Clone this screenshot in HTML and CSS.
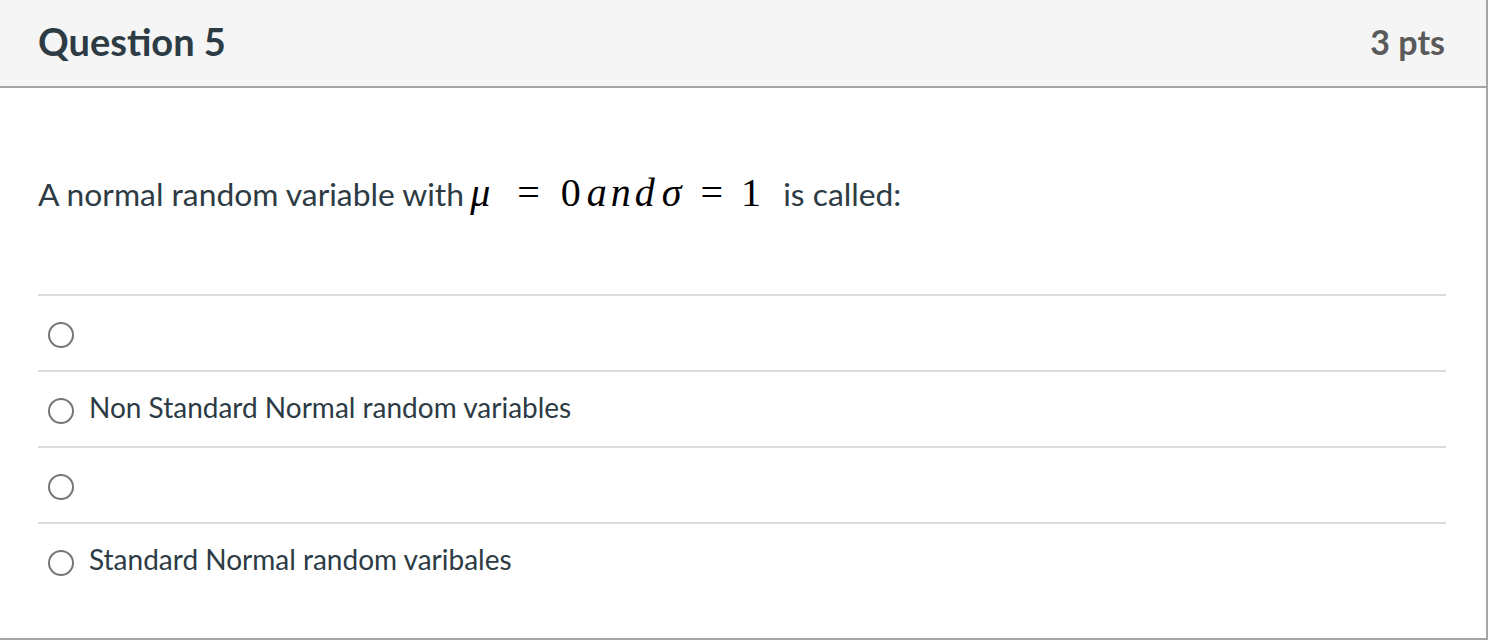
FILE: index.html
```html
<!DOCTYPE html>
<html>
<head>
<meta charset="utf-8">
<link rel="stylesheet" href="styles.css">
</head>
<body>
<div class="question">
  <div class="q-header">
    <h2 class="q-title">Question 5</h2>
    <span class="q-points">3 pts</span>
  </div>
  <div class="q-body">
    <p class="q-text">A normal random variable with <span class="math"><i class="mi mu">μ</i><span class="mo eq1">=</span><span class="mn zero">0</span><i class="mi and">and</i><i class="mi sigma">σ</i><span class="mo eq2">=</span><span class="mn one">1</span></span> is called:</p>
    <div class="answers">
      <label class="answer"><span class="radio"></span><span class="a-text"></span></label>
      <label class="answer"><span class="radio"></span><span class="a-text">Non Standard Normal random variables</span></label>
      <label class="answer"><span class="radio"></span><span class="a-text"></span></label>
      <label class="answer"><span class="radio"></span><span class="a-text">Standard Normal random varibales</span></label>
    </div>
  </div>
</div>
</body>
</html>
```
FILE: styles.css
```css
html, body {
  margin: 0;
  padding: 0;
  background: #ffffff;
}
body {
  font-family: Lato, "Noto Sans", sans-serif;
  color: #2d3b45;
}
.question {
  width: 1488px;
  height: 640px;
  box-sizing: border-box;
  border-right: 2px solid #a5a5a5;
  border-bottom: 2px solid #a5a5a5;
}
.q-header {
  height: 88px;
  box-sizing: border-box;
  background: #f5f5f5;
  border-bottom: 2px solid #a5a5a5;
  display: flex;
  align-items: center;
  justify-content: space-between;
  padding: 0 41px 4px 38px;
}
.q-title {
  margin: 0;
  font-size: 38px;
  font-weight: 700;
  color: #2d3b45;
}
.q-points {
  font-size: 34px;
  font-weight: 700;
  color: #5a5a5a;
}
.q-body {
  padding: 0 40px 0 38px;
}
.q-text {
  margin: 0;
  padding-top: 83px;
  height: 123px;
  box-sizing: content-box;
  font-size: 31.8px;
  line-height: 44px;
}
.math {
  font-family: "Liberation Serif", "DejaVu Serif", serif;
  font-size: 40px;
  color: #000;
  margin: 0 14px 0 -2px;
}
.mi {
  font-style: italic;
}
.eq1 {
  margin: 0 21px 0 27px;
}
.zero {
  margin-right: 6px;
}
.and {
  letter-spacing: 4px;
}
.sigma {
  margin-left: 3px;
}
.eq2 {
  margin: 0 18px 0 19px;
}
.answers {
  display: flex;
  flex-direction: column;
}
.answer {
  display: flex;
  align-items: center;
  height: 74px;
  border-top: 2px solid #dcdcdc;
}
.radio {
  width: 22px;
  height: 22px;
  border: 2px solid #767676;
  border-radius: 50%;
  margin: 4px 0 0 10px;
  flex: none;
}
.a-text {
  margin: 0 0 5px 15px;
  font-size: 28px;
}
```
